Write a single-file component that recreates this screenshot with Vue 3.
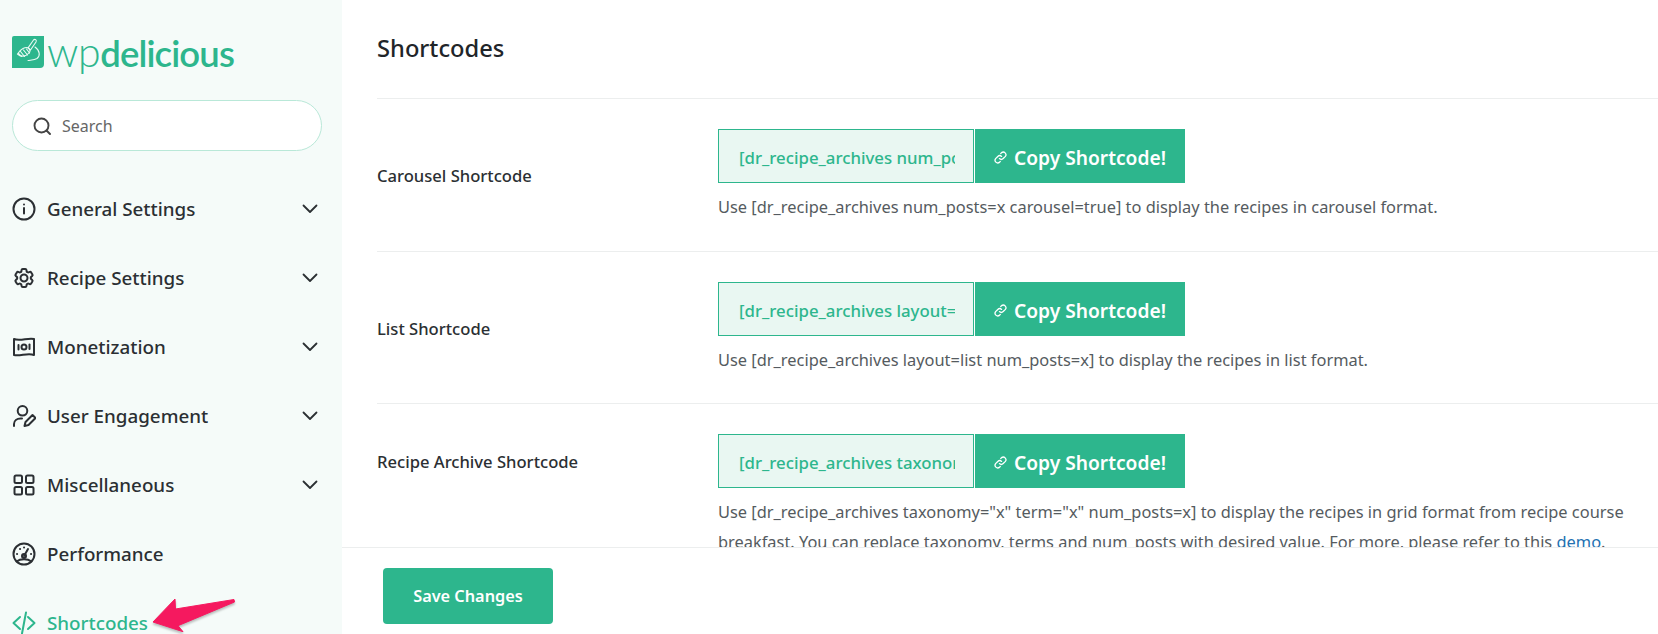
<template>
  <div class="page">
    <aside class="sidebar">
      <div class="logo">
        <svg class="logo-mark" viewBox="0 0 32 32" width="32" height="32">
          <path d="M0 2a2 2 0 0 1 2-2h30v28a4 4 0 0 1-4 4H0z" fill="#2db68d"/>
          <g fill="none" stroke="#eafaf4" stroke-width="1.1" stroke-linecap="round">
            <path d="M21.500 4c1.500-1.500 3.500 0 2.500 2l-5.500 8-2.500-2z"/>
            <path d="M16.500 12c-3-1.500-8 1-11 6 3 3 8 3 11.500-1 1.500-1.500 1-3.500-.5-5z"/>
            <path d="M8.500 15.500l4 5M11.500 14l4 5M6.500 17.500l3 3M14.500 13l3 4"/>
            <path d="M23 11c5 3.500 5.500 9 2 11.500-2.500 1.500-6 1.500-9 2"/>
          </g>
        </svg>
        <span class="logo-text"><span class="wp">wp</span><span class="del">delicious</span></span>
      </div>
      <div class="search">
        <svg class="search-icon" viewBox="0 0 18 18" width="18" height="18" fill="none" stroke="#444" stroke-width="1.900">
          <circle cx="8.500" cy="8.500" r="7"/><path d="M13.500 13.500L17 17" stroke-linecap="round"/>
        </svg>
        <span class="search-ph">Search</span>
      </div>
      <nav class="nav">
        <div v-for="item in menu" :key="item.label" class="nav-item" :class="{ active: item.active }">
          <svg class="nav-icon" viewBox="0 0 24 24" width="24" height="24" fill="none" stroke="currentColor" stroke-width="2" stroke-linecap="round" stroke-linejoin="round">
            <path v-for="d in item.paths" :key="d" :d="d"/>
          </svg>
          <span class="nav-label">{{ item.label }}</span>
          <svg v-if="item.chevron" class="chev" viewBox="0 0 16 10" width="16" height="10" fill="none" stroke="currentColor" stroke-width="1.800" stroke-linecap="round" stroke-linejoin="round">
            <path d="M1.500 1.500L8 8l6.500-6.500"/>
          </svg>
        </div>
      </nav>
      <svg class="arrow" viewBox="0 0 90 42" width="90" height="42">
        <path d="M3 27L25 4l.5 10L84 4.500l.5 2.500L28 30.700 33 36.700z" fill="#f5195f" stroke="#f5195f" stroke-width="1" stroke-linejoin="round"/>
      </svg>
    </aside>
    <main class="main">
      <div class="scroll">
        <h1 class="title">Shortcodes</h1>
        <section v-for="row in rows" :key="row.label" class="row">
          <div class="row-label" :class="{ top: row.top }">{{ row.label }}</div>
          <div class="row-body">
            <div class="copy">
              <input class="code" readonly :value="row.code">
              <button class="copy-btn">
                <svg viewBox="0 0 24 24" width="13" height="13" fill="none" stroke="#fff" stroke-width="2.400" stroke-linecap="round">
                  <path d="M10 14a5 5 0 0 0 7 0l4-4a5 5 0 0 0-7-7l-1.500 1.500"/>
                  <path d="M14 10a5 5 0 0 0-7 0l-4 4a5 5 0 0 0 7 7l1.500-1.500"/>
                </svg>
                Copy Shortcode!
              </button>
            </div>
            <p class="desc">{{ row.desc }}<template v-if="row.link"><a class="link">{{ row.link }}</a>.</template></p>
          </div>
        </section>
      </div>
      <footer class="footer">
        <button class="save">Save Changes</button>
      </footer>
    </main>
  </div>
</template>

<script setup>
const menu = [
  { label: 'General Settings', chevron: true, paths: ['M12 1.500a10.500 10.500 0 1 0 0 21 10.500 10.500 0 0 0 0-21z', 'M12 11v5.500', 'M12 7.500v.1'] },
  { label: 'Recipe Settings', chevron: true, paths: ['M9.594 3.940c.09-.542.56-.94 1.110-.94h2.593c.55 0 1.020.398 1.110.94l.213 1.281c.063.374.313.686.645.870.074.04.147.083.22.127.324.196.72.257 1.075.124l1.217-.456a1.125 1.125 0 0 1 1.370.49l1.296 2.247a1.125 1.125 0 0 1-.26 1.431l-1.003.827c-.293.24-.438.613-.431.992a6.759 6.759 0 0 1 0 .255c-.007.378.138.75.43.99l1.005.828c.424.35.534.954.26 1.430l-1.298 2.247a1.125 1.125 0 0 1-1.369.491l-1.217-.456c-.355-.133-.75-.072-1.076.124a6.570 6.570 0 0 1-.22.128c-.331.183-.581.495-.644.869l-.213 1.280c-.09.543-.56.941-1.110.941h-2.594c-.55 0-1.020-.398-1.110-.94l-.213-1.281c-.062-.374-.312-.686-.644-.87a6.520 6.520 0 0 1-.22-.127c-.325-.196-.72-.257-1.076-.124l-1.217.456a1.125 1.125 0 0 1-1.369-.49l-1.297-2.247a1.125 1.125 0 0 1 .26-1.431l1.004-.827c.292-.24.437-.613.43-.992a6.932 6.932 0 0 1 0-.255c.007-.378-.138-.75-.43-.99l-1.004-.828a1.125 1.125 0 0 1-.26-1.430l1.297-2.247a1.125 1.125 0 0 1 1.370-.491l1.216.456c.356.133.751.072 1.076-.124.072-.044.146-.087.22-.128.332-.183.582-.495.644-.869l.214-1.281z', 'M12 8.500a3.500 3.500 0 1 0 0 7 3.500 3.500 0 0 0 0-7z'] },
  { label: 'Monetization', chevron: true, paths: ['M2 4c6 2.500 14-1.500 20 0v16c-6-2.500-14 1.500-20 0z', 'M6.500 10v4.500', 'M17.500 9.500v4.500', 'M12 9.500a2.500 2.500 0 1 0 0 5 2.500 2.500 0 0 0 0-5z'] },
  { label: 'User Engagement', chevron: true, paths: ['M10.500 2a4.800 4.800 0 1 0 0 9.600 4.800 4.800 0 0 0 0-9.600z', 'M2 22v-2c0-3.500 3-5.500 6.500-5.500H10', 'M12.500 22l1-4 7-7 3 3-7 7z'] },
  { label: 'Miscellaneous', chevron: true, paths: ['M4 2.500h4.500A1.500 1.500 0 0 1 10 4v4.500A1.500 1.500 0 0 1 8.500 10H4a1.500 1.500 0 0 1-1.500-1.500V4A1.500 1.500 0 0 1 4 2.500z', 'M15.500 2.500H20A1.500 1.500 0 0 1 21.500 4v4.500A1.500 1.500 0 0 1 20 10h-4.500A1.500 1.500 0 0 1 14 8.500V4a1.500 1.500 0 0 1 1.500-1.500z', 'M4 14h4.500a1.500 1.500 0 0 1 1.500 1.500V20a1.500 1.500 0 0 1-1.500 1.500H4A1.500 1.500 0 0 1 2.500 20v-4.500A1.500 1.500 0 0 1 4 14z', 'M15.500 14H20a1.500 1.500 0 0 1 1.500 1.500V20a1.500 1.500 0 0 1-1.500 1.500h-4.500A1.500 1.500 0 0 1 14 20v-4.500a1.500 1.500 0 0 1 1.500-1.500z'] },
  { label: 'Performance', chevron: false, paths: ['M12 1.500a10.500 10.500 0 1 0 0 21 10.500 10.500 0 0 0 0-21z', 'M12 14l4-7', 'M12 12a2 2 0 1 0 0 4 2 2 0 0 0 0-4z', 'M4.500 19.500c4-3 11-3 15 0', 'M5 12h.1M8 7h.1M12 5.500h.1M19 12h.1'] },
  { label: 'Shortcodes', chevron: false, active: true, paths: ['M8 6l-6.500 6L8 18', 'M16 6l6.500 6L16 18', 'M14 1.500L10 22.500'] }
]
const rows = [
  { label: 'Carousel Shortcode', code: '[dr_recipe_archives num_posts=x carousel=true]', desc: 'Use [dr_recipe_archives num_posts=x carousel=true] to display the recipes in carousel format.' },
  { label: 'List Shortcode', code: '[dr_recipe_archives layout=list num_posts=x]', desc: 'Use [dr_recipe_archives layout=list num_posts=x] to display the recipes in list format.' },
  { label: 'Recipe Archive Shortcode', top: true, code: '[dr_recipe_archives taxonomy="x" term="x" num_posts=x]', desc: 'Use [dr_recipe_archives taxonomy="x" term="x" num_posts=x] to display the recipes in grid format from recipe course breakfast. You can replace taxonomy, terms and num_posts with desired value. For more, please refer to this ', link: 'demo' }
]
</script>

<style>
html, body { margin: 0; background: #fff; }
</style>

<style scoped>
.page {
  display: flex;
  width: 1658px;
  height: 634px;
  overflow: hidden;
  font-family: "Noto Sans", "Open Sans", sans-serif;
  color: #2b2f33;
}
.sidebar {
  position: relative;
  flex: 0 0 342px;
  box-sizing: border-box;
  height: 634px;
  padding: 36px 20px 0 12px;
  background: #f5fbf9;
  overflow: hidden;
}
.logo {
  display: flex;
  align-items: center;
  gap: 3px;
  height: 32px;
}
.logo-mark { flex: none; }
.logo-text {
  font-family: Lato, sans-serif;
  font-size: 36.500px;
  line-height: 32px;
  color: #2db68d;
}
.wp { font-size: 41px; font-weight: 300; letter-spacing: -.3px; }
.del { font-weight: 600; letter-spacing: -.9px; }
.search {
  display: flex;
  align-items: center;
  box-sizing: border-box;
  height: 51px;
  margin-top: 32px;
  padding-left: 20px;
  background: #fff;
  border: 1px solid #b9e8d8;
  border-radius: 26px;
}
.search-icon { flex: none; }
.search-ph {
  margin-left: 11px;
  font-size: 16px;
  color: #666;
}
.nav {
  display: flex;
  flex-direction: column;
  margin-top: 23px;
}
.nav-item {
  display: flex;
  align-items: center;
  height: 69px;
}
.nav-item.active { color: #2db68d; }
.nav-icon { flex: none; width: 24px; height: 24px; }
.nav-label {
  flex: 1;
  margin-left: 11px;
  font-size: 18.800px;
  font-weight: 500;
}
.chev { flex: none; margin-right: 4px; }
.arrow {
  position: absolute;
  left: 150px;
  top: 595px;
  filter: drop-shadow(0 2px 1px rgba(0,0,0,.25));
}
.main {
  flex: 1;
  display: flex;
  flex-direction: column;
  min-width: 0;
}
.scroll {
  flex: 0 0 547px;
  box-sizing: border-box;
  padding-left: 35px;
  overflow: hidden;
}
.title {
  margin: 0;
  height: 99px;
  box-sizing: border-box;
  padding-top: 31px;
  font-size: 23.700px;
  line-height: 34px;
  font-weight: 500;
  color: #212529;
  border-bottom: 1px solid #eceeee;
}
.row {
  display: flex;
  box-sizing: border-box;
  align-items: center;
  padding: 30px 0 29px;
  border-bottom: 1px solid #eceeee;
}
.row + .row { padding-bottom: 28px; }
.row-label {
  flex: 0 0 341px;
  font-size: 16.600px;
  font-weight: 500;
  color: #2b2f33;
}
.row-label.top {
  align-self: flex-start;
  margin-top: 16px;
}
.row-body { flex: 1; min-width: 0; padding-right: 20px; }
.copy { display: flex; gap: 1px; }
.code {
  box-sizing: border-box;
  width: 256px;
  height: 54px;
  padding: 3px 18px 0 20px;
  border: 1px solid #2db68d;
  background: #e9f7f2;
  color: #2db68d;
  font: 500 16.800px "Noto Sans", sans-serif;
  outline: none;
}
.copy-btn {
  display: flex;
  align-items: center;
  justify-content: center;
  gap: 7px;
  width: 210px;
  height: 54px;
  padding: 2px 0 0;
  border: none;
  background: #2db68d;
  color: #fff;
  font: 600 19.200px "Noto Sans", sans-serif;
}
.desc {
  margin: 9px 0 0;
  font-size: 16.400px;
  line-height: 30px;
  color: #555b60;
}
.link { color: #2271b1; }
.footer {
  flex: 1;
  display: flex;
  box-sizing: border-box;
  padding: 20px 0 0 41px;
  border-top: 1px solid #eceeee;
}
.save {
  width: 170px;
  height: 56px;
  padding: 0;
  border: none;
  border-radius: 4px;
  background: #2db68d;
  color: #fff;
  font: 600 16.300px "Noto Sans", sans-serif;
}
</style>
